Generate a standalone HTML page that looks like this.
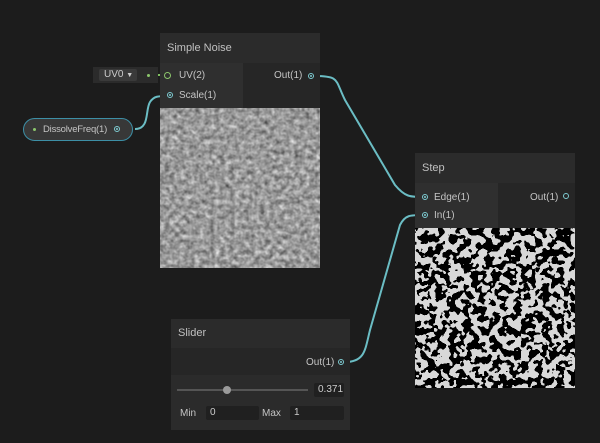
<!DOCTYPE html>
<html><head><style>
body{margin:0;width:600px;height:443px;background:#1c1c1c;overflow:hidden;position:relative;font-family:"Liberation Sans",sans-serif;font-size:10px;color:#c4c4c4}
.a{position:absolute}
.hd{background:#2b2b2b;color:#c0c0c0;font-size:11px}
.port{width:6px;height:6px;border:1px solid #7ecbd1;border-radius:50%;position:absolute;box-sizing:border-box}
.port::after{content:"";position:absolute;left:1px;top:1px;width:2px;height:2px;background:#7ecbd1;border-radius:50%}
.fld{background:#202020;border-radius:2px;position:absolute;height:14px;color:#ccc;font-size:10px;line-height:14px;padding-left:4px;box-sizing:border-box}
</style></head><body>
<svg class="a" style="left:0;top:0" width="600" height="443">
<defs>
<filter id="n" x="0" y="0" width="100%" height="100%" color-interpolation-filters="sRGB"><feTurbulence type="fractalNoise" baseFrequency="0.2" numOctaves="2" seed="3"/><feColorMatrix type="matrix" values="0.45 0.45 0 0 0.15 0.45 0.45 0 0 0.15 0.45 0.45 0 0 0.15 0 0 0 0 1"/></filter>
<filter id="s" x="0" y="0" width="100%" height="100%" color-interpolation-filters="sRGB"><feTurbulence type="fractalNoise" baseFrequency="0.14" numOctaves="2" seed="5"/><feColorMatrix type="matrix" values="0.5 0.5 0 0 0 0.5 0.5 0 0 0 0.5 0.5 0 0 0 0 0 0 0 1"/><feComponentTransfer><feFuncR type="discrete" tableValues="0 0.85"/><feFuncG type="discrete" tableValues="0 0.85"/><feFuncB type="discrete" tableValues="0 0.85"/></feComponentTransfer></filter>
</defs>
<rect x="160" y="108" width="160" height="160" filter="url(#n)"/>
<rect x="415" y="228" width="160" height="160" filter="url(#s)"/>
<g fill="none" stroke="#6bbdc4" stroke-width="2">
<path d="M315 76 C340 76,335 80,345 100 L395 185 C405 197,410 197,424 197"/>
<path d="M345 362 C365 362,365 350,370 330 L400 225 C405 215,410 215,424 215"/>
<path d="M135 129 C150 129,145 110,150 102 C154 96,158 96,169 96"/>
</g>
<path d="M148 75 H166" stroke="#7fc060" stroke-width="2"/>
</svg>
<div class="a hd" style="left:160px;top:33px;width:160px;height:30px;line-height:30px;padding-left:7px;box-sizing:border-box">Simple Noise</div>
<div class="a" style="left:160px;top:63px;width:83px;height:45px;background:#2f2f2f"></div>
<div class="a" style="left:243px;top:63px;width:77px;height:45px;background:#262626"></div>
<div class="a" style="left:164px;top:72px;width:7px;height:7px;border:1px solid #8cc66c;border-radius:50%;box-sizing:border-box"></div>
<div class="a" style="left:179px;top:70px">UV(2)</div>
<div class="port" style="left:167px;top:92px"></div>
<div class="a" style="left:179px;top:90px">Scale(1)</div>
<div class="a" style="left:274px;top:70px">Out(1)</div>
<div class="port" style="left:308px;top:73px"></div>
<div class="a" style="left:93px;top:67px;width:65px;height:16px;background:#2b2b2b"></div>
<div class="a" style="left:99px;top:69px;width:38px;height:12px;background:#3a3a3a;border-radius:2px;line-height:12px;padding-left:5px;box-sizing:border-box;color:#ccc">UV0 <span style="font-size:7px">▼</span></div>
<div class="a" style="left:147px;top:74px;width:3px;height:3px;background:#8cc66c;border-radius:50%"></div>
<div class="a" style="left:23px;top:118px;width:110px;height:23px;background:#383838;border:1px solid #3d8fa6;border-radius:12px;box-sizing:border-box"></div>
<div class="a" style="left:33px;top:128px;width:3px;height:3px;background:#8cc66c;border-radius:50%"></div>
<div class="a" style="left:43px;top:124px;font-size:9.5px;letter-spacing:-0.2px">DissolveFreq(1)</div>
<div class="port" style="left:114px;top:126px"></div>
<div class="a hd" style="left:415px;top:153px;width:160px;height:30px;line-height:30px;padding-left:7px;box-sizing:border-box">Step</div>
<div class="a" style="left:415px;top:183px;width:83px;height:45px;background:#2f2f2f"></div>
<div class="a" style="left:498px;top:183px;width:77px;height:45px;background:#262626"></div>
<div class="port" style="left:422px;top:194px"></div>
<div class="a" style="left:434px;top:192px">Edge(1)</div>
<div class="port" style="left:422px;top:212px"></div>
<div class="a" style="left:434px;top:210px">In(1)</div>
<div class="a" style="left:530px;top:192px">Out(1)</div>
<div class="a" style="left:563px;top:193px;width:6px;height:6px;border:1px solid #7ecbd1;border-radius:50%;box-sizing:border-box"></div>
<div class="a hd" style="left:171px;top:319px;width:179px;height:29px;line-height:29px;padding-left:7px;box-sizing:border-box">Slider</div>
<div class="a" style="left:171px;top:348px;width:179px;height:27px;background:#262626"></div>
<div class="a" style="left:306px;top:357px">Out(1)</div>
<div class="port" style="left:338px;top:359px"></div>
<div class="a" style="left:171px;top:375px;width:179px;height:55px;background:#2b2b2b"></div>
<div class="a" style="left:177px;top:389px;width:131px;height:2px;background:#555"></div>
<div class="a" style="left:223px;top:386px;width:8px;height:8px;background:#9a9a9a;border-radius:50%"></div>
<div class="fld" style="left:314px;top:383px;width:30px;text-align:right;padding-right:2px">0.371</div>
<div class="a" style="left:180px;top:408px">Min</div>
<div class="fld" style="left:206px;top:406px;width:53px">0</div>
<div class="a" style="left:262px;top:408px">Max</div>
<div class="fld" style="left:290px;top:406px;width:54px">1</div>
</body></html>
